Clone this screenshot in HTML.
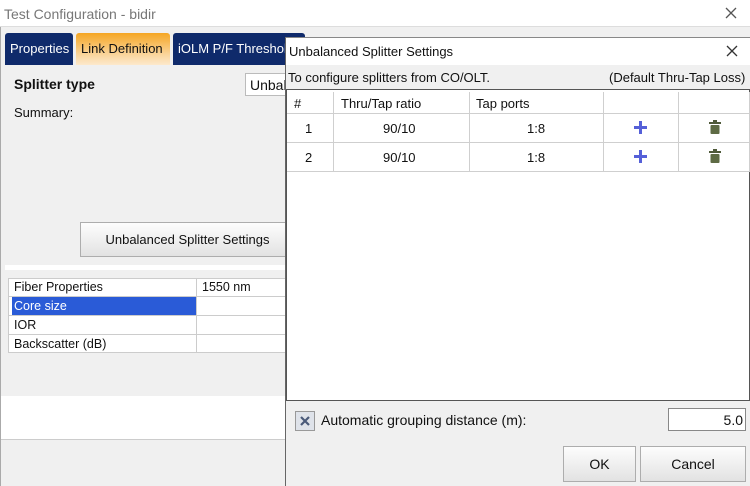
<!DOCTYPE html>
<html><head><style>
*{margin:0;padding:0;box-sizing:border-box}
body{width:750px;height:486px;position:relative;overflow:hidden;background:#fff;font-family:"Liberation Sans",sans-serif;font-size:13px;color:#111}
div{position:absolute}
.t{white-space:nowrap}
.tab{top:33px;height:32px;color:#fff;font-size:13px;padding:8px 0 0 5px;border-radius:3px 3px 0 0;overflow:hidden;white-space:nowrap}
.btn{background:linear-gradient(#fdfdfd,#e2e2e2);border:1px solid #adadad;text-align:center;font-size:14px}
.cell{border-right:1px solid #cfcfcf;border-bottom:1px solid #cfcfcf;height:100%}
.x{position:absolute}
</style></head><body>
<div style="left:0;top:0;width:750px;height:27px;background:#fff;border-bottom:1px solid #ddd"></div>
<div class="t" style="left:4px;top:6px;font-size:14px;color:#777">Test Configuration - bidir</div>
<svg class="x" style="left:725px;top:7px" width="12" height="12"><path d="M1 1L11 11M11 1L1 11" stroke="#555" stroke-width="1.3"/></svg>
<div style="left:0;top:27px;width:750px;height:459px;background:#f0f0f0;border-left:1px solid #aaa"></div>
<div class="tab" style="left:5px;width:68px;background:#0f2a6b">Properties</div>
<div class="tab" style="left:76px;width:94px;background:linear-gradient(#f5a623,#fad7a0 70%,#fde9cc);color:#111">Link Definition</div>
<div class="tab" style="left:173px;width:132px;background:#0f2a6b">iOLM P/F Threshold</div>
<div style="left:5px;top:65px;width:290px;height:200px;background:#f0f0f0"></div>
<div class="t" style="left:14px;top:76px;font-weight:bold;font-size:14px">Splitter type</div>
<div style="left:245px;top:73px;width:50px;height:23px;background:#fff;border:1px solid #bbb;padding:3px 4px;font-size:14px" class="t">Unbal</div>
<div class="t" style="left:14px;top:105px;font-size:13px">Summary:</div>
<div class="btn" style="left:80px;top:222px;width:215px;height:35px;padding-top:9px;font-size:13px">Unbalanced Splitter Settings</div>
<div style="left:5px;top:265px;width:290px;height:5px;background:#fff"></div>
<div style="left:5px;top:270px;width:290px;height:126px;background:#f0f0f0"></div>
<div style="left:8px;top:278px;width:290px;height:75px;background:#fff;border:1px solid #ccc"></div>
<div style="left:8px;top:296px;width:290px;height:1px;background:#ccc"></div>
<div style="left:8px;top:315px;width:290px;height:1px;background:#ccc"></div>
<div style="left:8px;top:334px;width:290px;height:1px;background:#ccc"></div>
<div style="left:196px;top:278px;width:1px;height:75px;background:#ccc"></div>
<div style="left:12px;top:297px;width:184px;height:18px;background:#2a5bd7"></div>
<div class="t" style="left:14px;top:280px;font-size:12.5px">Fiber Properties</div>
<div class="t" style="left:202px;top:280px;font-size:12.5px">1550 nm</div>
<div class="t" style="left:14px;top:299px;color:#fff;font-size:12.5px">Core size</div>
<div class="t" style="left:14px;top:318px;font-size:12.5px">IOR</div>
<div class="t" style="left:14px;top:337px;font-size:12.5px">Backscatter (dB)</div>
<div style="left:1px;top:396px;width:290px;height:43px;background:#fff"></div>
<div style="left:1px;top:439px;width:290px;height:1px;background:#ccc"></div>

<div style="left:285px;top:37px;width:465px;height:449px;background:#f0f0f0;border-left:1px solid #666;border-top:1px solid #888"></div>
<div style="left:286px;top:38px;width:464px;height:27px;background:#fff"></div>
<div class="t" style="left:289px;top:44px;font-size:13px">Unbalanced Splitter Settings</div>
<svg class="x" style="left:726px;top:45px" width="12" height="12"><path d="M1 1L11 11M11 1L1 11" stroke="#333" stroke-width="1.3"/></svg>
<div class="t" style="left:288px;top:70px">To configure splitters from CO/OLT.</div>
<div class="t" style="left:609px;top:70px">(Default Thru-Tap Loss)</div>
<div style="left:286px;top:89px;width:464px;height:312px;background:#fff;border:1px solid #555"></div>
<div style="left:287px;top:92px;width:463px;height:81px">
 <div class="cell" style="left:0;top:0;width:47px;height:22px"></div>
 <div class="cell" style="left:47px;top:0;width:136px;height:22px"></div>
 <div class="cell" style="left:183px;top:0;width:134px;height:22px"></div>
 <div class="cell" style="left:317px;top:0;width:75px;height:22px"></div>
 <div class="cell" style="left:392px;top:0;width:71px;height:22px"></div>
 <div class="cell" style="left:0;top:22px;width:47px;height:29px"></div>
 <div class="cell" style="left:47px;top:22px;width:136px;height:29px"></div>
 <div class="cell" style="left:183px;top:22px;width:134px;height:29px"></div>
 <div class="cell" style="left:317px;top:22px;width:75px;height:29px"></div>
 <div class="cell" style="left:392px;top:22px;width:71px;height:29px"></div>
 <div class="cell" style="left:0;top:51px;width:47px;height:29px"></div>
 <div class="cell" style="left:47px;top:51px;width:136px;height:29px"></div>
 <div class="cell" style="left:183px;top:51px;width:134px;height:29px"></div>
 <div class="cell" style="left:317px;top:51px;width:75px;height:29px"></div>
 <div class="cell" style="left:392px;top:51px;width:71px;height:29px"></div>
</div>
<div class="t" style="left:294px;top:96px">#</div>
<div class="t" style="left:341px;top:96px">Thru/Tap ratio</div>
<div class="t" style="left:476px;top:96px">Tap ports</div>
<div class="t" style="left:305px;top:121px">1</div><div class="t" style="left:383px;top:121px">90/10</div><div class="t" style="left:527px;top:121px">1:8</div>
<div class="t" style="left:305px;top:150px">2</div><div class="t" style="left:383px;top:150px">90/10</div><div class="t" style="left:527px;top:150px">1:8</div>
<svg class="x" style="left:634px;top:121px" width="13" height="13"><path d="M6.5 0V13M0 6.5H13" stroke="#5560d8" stroke-width="3"/></svg>
<svg class="x" style="left:634px;top:150px" width="13" height="13"><path d="M6.5 0V13M0 6.5H13" stroke="#5560d8" stroke-width="3"/></svg>
<svg class="x" style="left:709px;top:120px" width="12" height="14"><rect x="0" y="2" width="12" height="2" fill="#4f5a3a"/><rect x="4" y="0" width="4" height="2" fill="#4f5a3a"/><rect x="1.5" y="5" width="9" height="9" rx="1" fill="#5e6b44"/></svg>
<svg class="x" style="left:709px;top:149px" width="12" height="14"><rect x="0" y="2" width="12" height="2" fill="#4f5a3a"/><rect x="4" y="0" width="4" height="2" fill="#4f5a3a"/><rect x="1.5" y="5" width="9" height="9" rx="1" fill="#5e6b44"/></svg>
<div style="left:295px;top:411px;width:20px;height:20px;background:#dfe3ea;border:1px solid #999"></div>
<svg class="x" style="left:300px;top:416px" width="10" height="10"><path d="M1 1L9 9M9 1L1 9" stroke="#4a5a7a" stroke-width="2.2"/></svg>
<div class="t" style="left:321px;top:412px;font-size:14px">Automatic grouping distance (m):</div>
<div style="left:668px;top:408px;width:78px;height:23px;background:#fff;border:1px solid #888;text-align:right;padding:3px 2px 0 0;font-size:14px">5.0</div>
<div class="btn" style="left:563px;top:446px;width:73px;height:36px;padding-top:9px">OK</div>
<div class="btn" style="left:640px;top:446px;width:106px;height:36px;padding-top:9px">Cancel</div>
</body></html>
